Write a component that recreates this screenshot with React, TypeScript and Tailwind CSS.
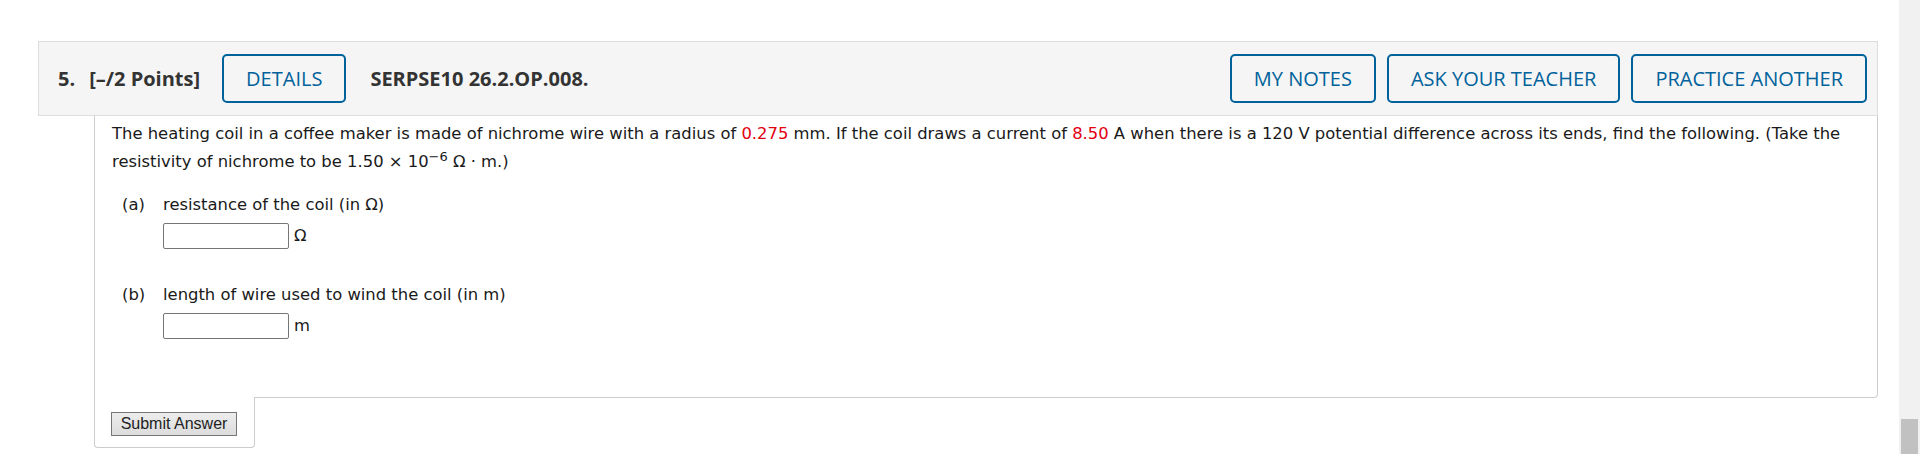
import React from "react";

const blueBtn =
  "h-[49px] px-[22px] rounded-[5px] border-2 border-[#00629b] text-[#00629b] text-[20px] font-normal bg-transparent leading-none flex items-center";

function Part({ label, text, unit }: { label: string; text: React.ReactNode; unit: string }) {
  return (
    <div className="pl-[10px]">
      <div className="flex leading-[28px]">
        <span className="w-[41px] shrink-0">{label}</span>
        <span>{text}</span>
      </div>
      <div className="flex items-center pl-[41px] mt-[4px]">
        <input
          type="text"
          className="w-[126px] h-[26px] border border-[#767676] rounded-[2px] bg-white outline-none px-1"
        />
        <span className="ml-[5px]">{unit}</span>
      </div>
    </div>
  );
}

export default function App() {
  return (
    <div className="w-full h-[454px] bg-white flex overflow-hidden">
      <div className="flex-1 pt-[41px] pl-[38px] pr-[21px]">
        {/* question header */}
        <div className="h-[75px] border border-[#dddddd] bg-[#f5f5f5] flex items-center pl-[19px] pr-[10px] font-['Open_Sans',sans-serif]">
          <span className="text-[20px] font-bold text-[#333333]">5.</span>
          <span className="ml-[14px] text-[20px] font-bold text-[#333333]">[–/2 Points]</span>
          <button className={`${blueBtn} ml-[22px]`}>DETAILS</button>
          <span className="ml-[24px] text-[20px] font-bold text-[#333333]">SERPSE10 26.2.OP.008.</span>
          <div className="flex-1" />
          <div className="flex items-center gap-[11px]">
            <button className={blueBtn}>MY NOTES</button>
            <button className={blueBtn}>ASK YOUR TEACHER</button>
            <button className={blueBtn}>PRACTICE ANOTHER</button>
          </div>
        </div>

        {/* question body */}
        <div className="ml-[56px] h-[282px] border-x border-b border-[#cccccc] rounded-br-[4px] bg-white pt-[4px] pl-[17px] pr-[20px] text-[16.4px] text-[#1a1a1a] font-['DejaVu_Sans',Verdana,sans-serif]">
          <p className="leading-[28px]">
            The heating coil in a coffee maker is made of nichrome wire with a radius of{" "}
            <span className="text-[#e3000f]">0.275</span> mm. If the coil draws a current of{" "}
            <span className="text-[#e3000f]">8.50</span> A when there is a 120 V potential difference across its
            ends, find the following. (Take the resistivity of nichrome to be{" "}
            <span>
              1.50 × 10<sup className="text-[13px]">−6</sup> Ω · m.
            </span>
            )
          </p>
          <div className="mt-[15px]">
            <Part label="(a)" text="resistance of the coil (in Ω)" unit="Ω" />
          </div>
          <div className="mt-[32px]">
            <Part label="(b)" text="length of wire used to wind the coil (in m)" unit="m" />
          </div>
        </div>

        {/* submit tab */}
        <div className="ml-[56px] -mt-px relative w-[161px] h-[51px] bg-white border-x border-b border-[#cccccc] rounded-b-[4px] pl-[16px] pt-[14px]">
          <button className="h-[24px] w-[126px] border border-[#767676] bg-[linear-gradient(#ededed,#dcdcdc)] text-[16px] leading-none text-[#222222] font-['Liberation_Sans',Arial,sans-serif]">
            Submit Answer
          </button>
        </div>
      </div>

      {/* scrollbar */}
      <div className="w-[21px] h-full bg-[#f1f1f1] flex flex-col justify-end items-center">
        <div className="w-[17px] h-[35px] bg-[#c1c1c1]" />
      </div>
    </div>
  );
}
